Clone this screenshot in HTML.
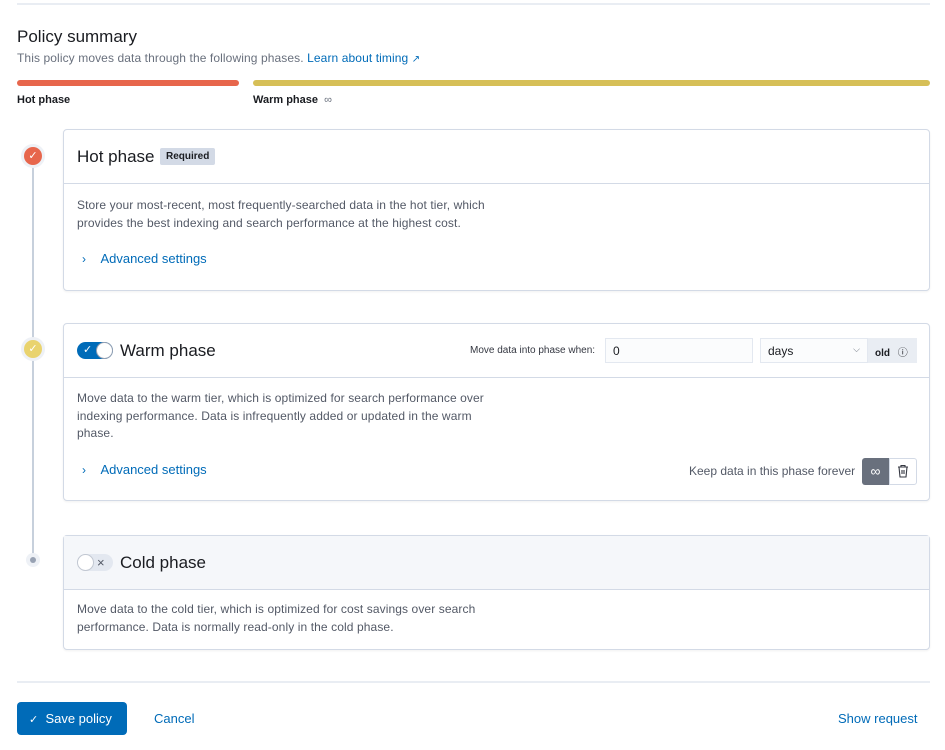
<!DOCTYPE html>
<html><head><style>
*{box-sizing:border-box;margin:0;padding:0}
body{width:945px;height:750px;background:#fff;font-family:"Liberation Sans",sans-serif;color:#1a1c21;position:relative;overflow:hidden}
.a{position:absolute}
.panel{position:absolute;left:63px;width:867px;border:1px solid #d3dae6;border-radius:4px;background:#fff;box-shadow:0 1px 2px rgba(0,0,0,.06)}
.hdr{height:54px;border-bottom:1px solid #d3dae6;position:relative}
.ttl{position:absolute;top:17px;font-size:17px;color:#1a1c21}
.txt{position:absolute;left:13px;font-size:12px;line-height:17.5px;color:#535966;letter-spacing:0.1px}
.adv{position:absolute;left:18px;font-size:13px;color:#006bb8}
.blue{color:#006bb8}
</style></head><body>
<div class="a" style="left:17px;top:3px;width:913px;height:2px;background:#e9edf3"></div>
<div class="a" style="left:17px;top:27px;font-size:17px;font-weight:500">Policy summary</div>
<div class="a" style="left:17px;top:51px;font-size:12px;color:#69707d;letter-spacing:0.1px">This policy moves data through the following phases. <span class="blue">Learn about timing</span> <span class="blue" style="font-size:10px">↗</span></div>
<div class="a" style="left:17px;top:80px;width:222px;height:6px;border-radius:3px;background:#e7664c"></div>
<div class="a" style="left:253px;top:80px;width:677px;height:6px;border-radius:3px;background:#d6bf57"></div>
<div class="a" style="left:17px;top:94px;font-size:11px;font-weight:bold">Hot phase</div>
<div class="a" style="left:253px;top:94px;font-size:11px;font-weight:bold">Warm phase <span style="font-weight:normal;color:#69707d;margin-left:3px">∞</span></div>

<div class="a" style="left:32px;top:165px;width:2px;height:395px;background:#c7d0dc"></div>
<div class="a" style="left:21px;top:144px;width:24px;height:24px;border-radius:50%;background:#eef1f6"></div>
<div class="a" style="left:24px;top:147px;width:18px;height:18px;border-radius:50%;background:#e7664c;color:#fff;font-size:11px;text-align:center;line-height:18px">✓</div>
<div class="a" style="left:21px;top:337px;width:24px;height:24px;border-radius:50%;background:#eef1f6"></div>
<div class="a" style="left:24px;top:340px;width:18px;height:18px;border-radius:50%;background:#e9d36e;color:#fff;font-size:11px;text-align:center;line-height:18px">✓</div>
<div class="a" style="left:26px;top:553px;width:14px;height:14px;border-radius:50%;background:#eef1f6"></div>
<div class="a" style="left:30px;top:557px;width:6px;height:6px;border-radius:50%;background:#98a2b3"></div>

<div class="panel" style="top:129px;height:162px">
 <div class="hdr"><div class="ttl" style="left:13px">Hot phase</div>
 <div class="a" style="left:96px;top:18px;background:#d3dae6;font-size:10px;font-weight:bold;padding:3px 6px;border-radius:2px">Required</div></div>
 <div class="txt" style="top:67px">Store your most-recent, most frequently-searched data in the hot tier, which<br>provides the best indexing and search performance at the highest cost.</div>
 <div class="adv" style="top:121px"><span style="font-size:12px">›</span>&nbsp;&nbsp;&nbsp;&nbsp;Advanced settings</div>
</div>

<div class="panel" style="top:323px;height:178px">
 <div class="hdr">
  <div class="a" style="left:13px;top:18px;width:36px;height:17px;border-radius:9px;background:#006bb8"></div>
  <div class="a" style="left:19px;top:19px;color:#fff;font-size:11px;line-height:15px">✓</div>
  <div class="a" style="left:32px;top:18px;width:17px;height:17px;border-radius:50%;background:#fff;border:1px solid #98a2b3"></div>
  <div class="ttl" style="left:56px">Warm phase</div>
  <div class="a" style="left:406px;top:21px;font-size:10px;color:#343741">Move data into phase when:</div>
  <div class="a" style="left:541px;top:14px;width:148px;height:25px;background:#fbfcfd;border:1px solid #e3e8f0;font-size:12px;padding:5px 7px">0</div>
  <div class="a" style="left:696px;top:14px;width:108px;height:25px;background:#fbfcfd;border:1px solid #e3e8f0;font-size:12px;padding:5px 7px">days<span style="position:absolute;right:7px;font-size:9px;color:#69707d">⌵</span></div>
  <div class="a" style="left:804px;top:14px;width:49px;height:25px;background:#e9edf3;font-size:10px;font-weight:bold;padding:6px 7px">old <span style="font-weight:normal;margin-left:5px">ⓘ</span></div>
 </div>
 <div class="txt" style="top:66px">Move data to the warm tier, which is optimized for search performance over<br>indexing performance. Data is infrequently added or updated in the warm<br>phase.</div>
 <div class="adv" style="top:138px"><span style="font-size:12px">›</span>&nbsp;&nbsp;&nbsp;&nbsp;Advanced settings</div>
 <div class="a" style="left:625px;top:140px;font-size:12px;color:#535966">Keep data in this phase forever</div>
 <div class="a" style="left:798px;top:134px;width:27px;height:27px;background:#69707d;border-radius:3px 0 0 3px;color:#fff;text-align:center;line-height:26px;font-size:14px">∞</div>
 <div class="a" style="left:825px;top:134px;width:28px;height:27px;border:1px solid #d3dae6;border-radius:0 3px 3px 0"><svg width="26" height="25" viewBox="0 0 26 25"><g fill="none" stroke="#343741" stroke-width="1.1"><path d="M8 8h10M11 8V6.5h4V8M9 8l1 10h6l1-10M12 11v4M14 11v4"/></g></svg></div>
</div>

<div class="panel" style="top:535px;height:115px">
 <div class="hdr" style="background:#f5f7fa">
  <div class="a" style="left:13px;top:18px;width:36px;height:17px;border-radius:9px;background:#e3e8f0"></div>
  <div class="a" style="left:13px;top:18px;width:17px;height:17px;border-radius:50%;background:#fff;border:1px solid #c2c8d2"></div>
  <div class="a" style="left:33px;top:18px;color:#535966;font-size:13px;line-height:17px">×</div>
  <div class="ttl" style="left:56px">Cold phase</div>
 </div>
 <div class="txt" style="top:65px">Move data to the cold tier, which is optimized for cost savings over search<br>performance. Data is normally read-only in the cold phase.</div>
</div>

<div class="a" style="left:17px;top:681px;width:913px;height:2px;background:#e9edf3"></div>
<div class="a" style="left:17px;top:702px;width:110px;height:33px;background:#006bb8;border-radius:4px;color:#fff;font-size:13px;line-height:33px;padding-left:12px"><span style="font-size:11px">✓</span>&nbsp; Save policy</div>
<div class="a blue" style="left:154px;top:711px;font-size:13px">Cancel</div>
<div class="a blue" style="left:838px;top:711px;font-size:13px">Show request</div>
</body></html>
